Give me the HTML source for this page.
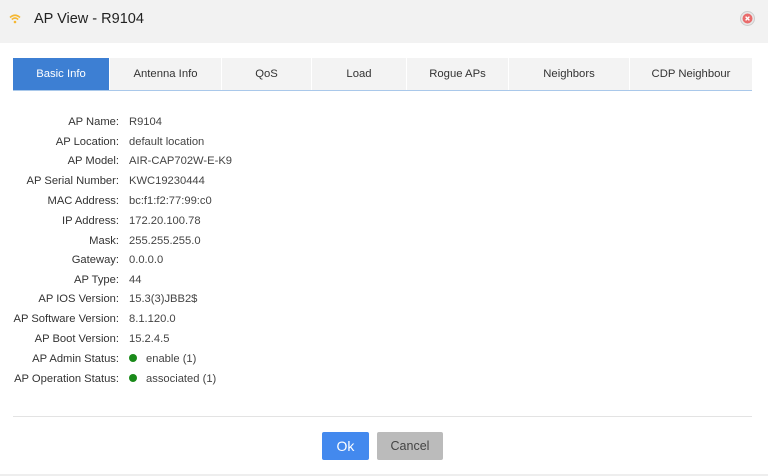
<!DOCTYPE html>
<html><head><style>
*{margin:0;padding:0;box-sizing:border-box}
body{width:768px;height:476px;background:#fff;font-family:"Liberation Sans",Arial,sans-serif;position:relative;overflow:hidden;color:#333}
.hdr{position:absolute;left:0;top:0;width:768px;height:43px;background:#f2f2f2}
.title{position:absolute;left:34px;top:10px;font-size:14.5px;color:#222;line-height:18px}
.tabs{position:absolute;left:13px;top:58px;width:739px;height:33px;background:#f3f3f3;border-bottom:1.5px solid #a9c8ea}
.tab{position:absolute;top:0;height:32px;line-height:32px;text-align:center;font-size:11.3px;color:#333;border-right:1px solid #fff}
.tab.a{background:#3d7fd3;color:#fff}
.row{position:absolute;left:0;width:768px;height:16px;font-size:11.2px;line-height:16px}
.l{position:absolute;right:649px;text-align:right;white-space:nowrap;color:#333}
.v{position:absolute;left:129px;white-space:nowrap;color:#444}
.dot{display:inline-block;width:8px;height:8px;border-radius:50%;background:#1a8a1a;margin-right:9px;vertical-align:0px}
.line{position:absolute;left:13px;top:416px;width:739px;height:1px;background:#e3e3e3}
.btn{position:absolute;top:432px;height:28px;line-height:28px;text-align:center;font-size:12.5px;border-radius:2px}
.bot{position:absolute;left:0;top:474px;width:768px;height:2px;background:#eee}
</style></head><body>
<div class="hdr">
<svg style="position:absolute;left:9px;top:14px" width="12" height="10" viewBox="0 0 12 10"><path d="M1 3.5Q6 -1 11 3.5" stroke="#f5b731" stroke-width="1.6" fill="none"/><path d="M2.8 5.5Q6 2.5 9.2 5.5" stroke="#f5b731" stroke-width="1.6" fill="none"/><circle cx="6" cy="8" r="1.3" fill="#f5b731"/></svg>
<div class="title">AP View - R9104</div>
<svg style="position:absolute;left:740px;top:11px" width="15" height="15" viewBox="0 0 15 15"><circle cx="7.5" cy="7.5" r="7" fill="#e8e8e8" stroke="#ccc"/><circle cx="7.5" cy="7.5" r="5" fill="#e96b6b"/><path d="M5.6 5.6L9.4 9.4M9.4 5.6L5.6 9.4" stroke="#fff" stroke-width="1.4"/></svg>
</div>
<div class="tabs">
<div class="tab a" style="left:0;width:97px">Basic Info</div>
<div class="tab" style="left:97px;width:112px">Antenna Info</div>
<div class="tab" style="left:209px;width:90px">QoS</div>
<div class="tab" style="left:299px;width:95px">Load</div>
<div class="tab" style="left:394px;width:102px">Rogue APs</div>
<div class="tab" style="left:496px;width:121px">Neighbors</div>
<div class="tab" style="left:617px;width:122px;border-right:none">CDP Neighbour</div>
</div>
<div class="row" style="top:114px"><span class="l">AP Name:</span><span class="v">R9104</span></div>
<div class="row" style="top:134px"><span class="l">AP Location:</span><span class="v">default location</span></div>
<div class="row" style="top:153px"><span class="l">AP Model:</span><span class="v">AIR-CAP702W-E-K9</span></div>
<div class="row" style="top:173px"><span class="l">AP Serial Number:</span><span class="v">KWC19230444</span></div>
<div class="row" style="top:193px"><span class="l">MAC Address:</span><span class="v">bc:f1:f2:77:99:c0</span></div>
<div class="row" style="top:213px"><span class="l">IP Address:</span><span class="v">172.20.100.78</span></div>
<div class="row" style="top:233px"><span class="l">Mask:</span><span class="v">255.255.255.0</span></div>
<div class="row" style="top:252px"><span class="l">Gateway:</span><span class="v">0.0.0.0</span></div>
<div class="row" style="top:272px"><span class="l">AP Type:</span><span class="v">44</span></div>
<div class="row" style="top:291px"><span class="l">AP IOS Version:</span><span class="v">15.3(3)JBB2$</span></div>
<div class="row" style="top:311px"><span class="l">AP Software Version:</span><span class="v">8.1.120.0</span></div>
<div class="row" style="top:331px"><span class="l">AP Boot Version:</span><span class="v">15.2.4.5</span></div>
<div class="row" style="top:351px"><span class="l">AP Admin Status:</span><span class="v"><span class="dot"></span>enable (1)</span></div>
<div class="row" style="top:371px"><span class="l">AP Operation Status:</span><span class="v"><span class="dot"></span>associated (1)</span></div>
<div class="line"></div>
<div class="btn" style="left:322px;width:47px;background:#4389ee;color:#fff;font-size:14px">Ok</div>
<div class="btn" style="left:377px;width:66px;background:#bbb;color:#444">Cancel</div>
<div class="bot"></div>
</body></html>
